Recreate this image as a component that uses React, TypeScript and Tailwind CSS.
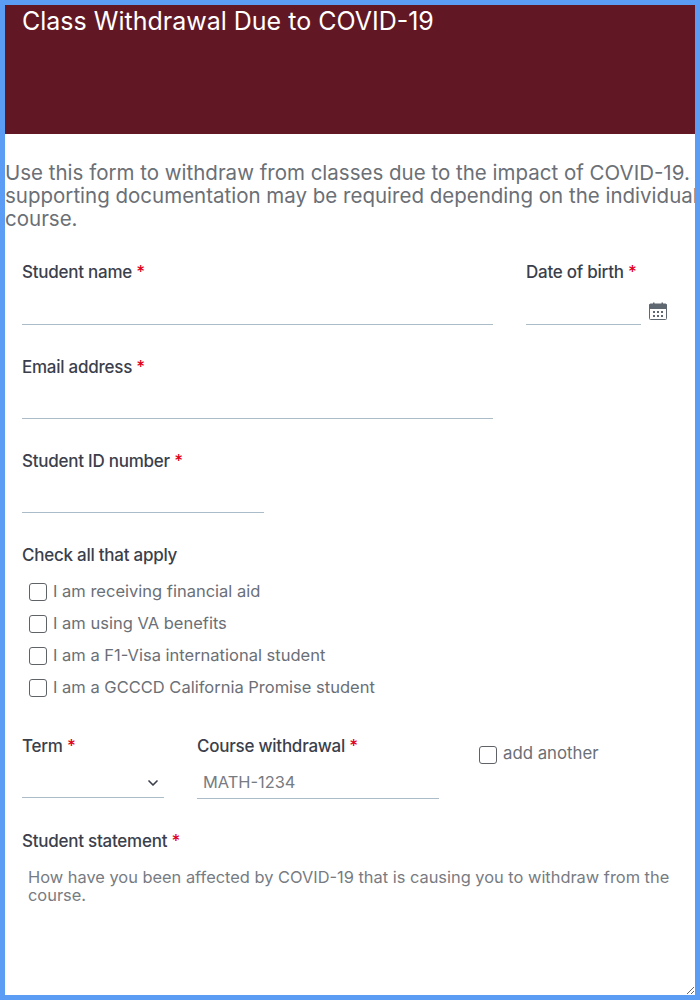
import React from 'react';
import { ChevronDown } from 'lucide-react';

const Label = ({ text, required = true }: { text: string; required?: boolean }) => (
  <label className="block text-[17px] leading-5 font-medium text-[#3b3f4c] tracking-[-0.25px]">
    {text}
    {required && <span className="text-[#e0001b]"> *</span>}
  </label>
);

const Box = () => (
  <input type="checkbox" className="appearance-none w-[18px] h-[18px] shrink-0 rounded-[3px] border border-[#5f6368] bg-white" />
);

const Check = ({ text }: { text: string }) => (
  <div className="flex items-center h-8 pl-[7px]">
    <Box />
    <span className="ml-[6px] mb-[2px] text-[16.5px] text-[#6b6f76]">{text}</span>
  </div>
);

const CalendarIcon = () => (
  <svg width="18" height="18" viewBox="0 0 18 18" className="text-[#5f6770]">
    <rect x="0.5" y="2" width="17" height="15.5" rx="1" fill="none" stroke="currentColor" />
    <rect x="0.5" y="2" width="17" height="5" fill="currentColor" />
    <rect x="4" y="0.5" width="1.5" height="2" fill="currentColor" />
    <rect x="12.5" y="0.5" width="1.5" height="2" fill="currentColor" />
    <g fill="currentColor">
      <rect x="4" y="9" width="2" height="2" />
      <rect x="8" y="9" width="2" height="2" />
      <rect x="12" y="9" width="2" height="2" />
      <rect x="4" y="13" width="2" height="2" />
      <rect x="8" y="13" width="2" height="2" />
      <rect x="12" y="13" width="2" height="2" />
    </g>
  </svg>
);

export default function App() {
  return (
    <div className="w-[700px] h-[1000px] overflow-hidden border-[5px] border-[#5b9df5] bg-white flex flex-col font-['Inter',sans-serif]">
      {/* Header */}
      <div className="h-[129px] shrink-0 bg-[#611824] pl-[17px] pt-[1px]">
        <h1 className="text-[25px] leading-[30px] text-white">Class Withdrawal Due to COVID-19</h1>
      </div>

      {/* Intro */}
      <p className="mt-[27px] text-[20.5px] leading-[23px] text-[#6b6f76] whitespace-nowrap overflow-hidden">
        Use this form to withdraw from classes due to the impact of COVID-19.
        <br />
        supporting documentation may be required depending on the individual
        <br />
        course.
      </p>

      <form className="pl-[17px] pt-[32px] flex flex-col flex-1 min-h-0">
        {/* Name + DOB */}
        <div className="flex">
          <div className="w-[471px]">
            <Label text="Student name" />
            <input className="w-full h-[43px] border-b border-[#a9bcc8] outline-none" />
          </div>
          <div className="ml-[33px]">
            <Label text="Date of birth" />
            <div className="flex items-end">
              <input className="w-[115px] h-[43px] border-b border-[#a9bcc8] outline-none" />
              <span className="ml-2 mb-[5px]">
                <CalendarIcon />
              </span>
            </div>
          </div>
        </div>

        <div className="w-[471px] mt-[32px]">
          <Label text="Email address" />
          <input className="w-full h-[42px] border-b border-[#a9bcc8] outline-none" />
        </div>

        <div className="w-[242px] mt-[32px]">
          <Label text="Student ID number" />
          <input className="w-full h-[42px] border-b border-[#a9bcc8] outline-none" />
        </div>

        <div className="mt-[32px]">
          <Label text="Check all that apply" required={false} />
          <div className="mt-[11px]">
            <Check text="I am receiving financial aid" />
            <Check text="I am using VA benefits" />
            <Check text="I am a F1-Visa international student" />
            <Check text="I am a GCCCD California Promise student" />
          </div>
        </div>

        {/* Term + course */}
        <div className="flex mt-[32px]">
          <div className="w-[142px]">
            <Label text="Term" />
            <div className="relative mt-[15px] h-[27px] border-b border-[#a9bcc8]">
              <ChevronDown className="absolute right-[3px] top-[4px] w-4 h-4 text-[#3b3f4c]" strokeWidth={2.5} />
            </div>
          </div>
          <div className="w-[242px] ml-[33px]">
            <Label text="Course withdrawal" />
            <input
              placeholder="MATH-1234"
              className="w-full mt-[10px] h-[33px] px-[6px] text-[16.4px] border-b border-[#a9bcc8] outline-none placeholder:text-[#777b82]"
            />
          </div>
          <div className="flex items-center h-[20px] mt-[9px] ml-[40px]">
            <Box />
            <span className="ml-[6px] mb-[2px] text-[16.8px] text-[#6b6f76]">add another</span>
          </div>
        </div>

        <div className="mt-[32px] flex flex-col flex-1 min-h-0">
          <Label text="Student statement" />
          <textarea
            placeholder="How have you been affected by COVID-19 that is causing you to withdraw from the course."
            className="flex-1 min-h-0 w-full mt-[9px] px-[6px] py-[8px] text-[16.4px] leading-[18px] outline-none placeholder:text-[#777b82]"
          />
        </div>
      </form>
    </div>
  );
}
